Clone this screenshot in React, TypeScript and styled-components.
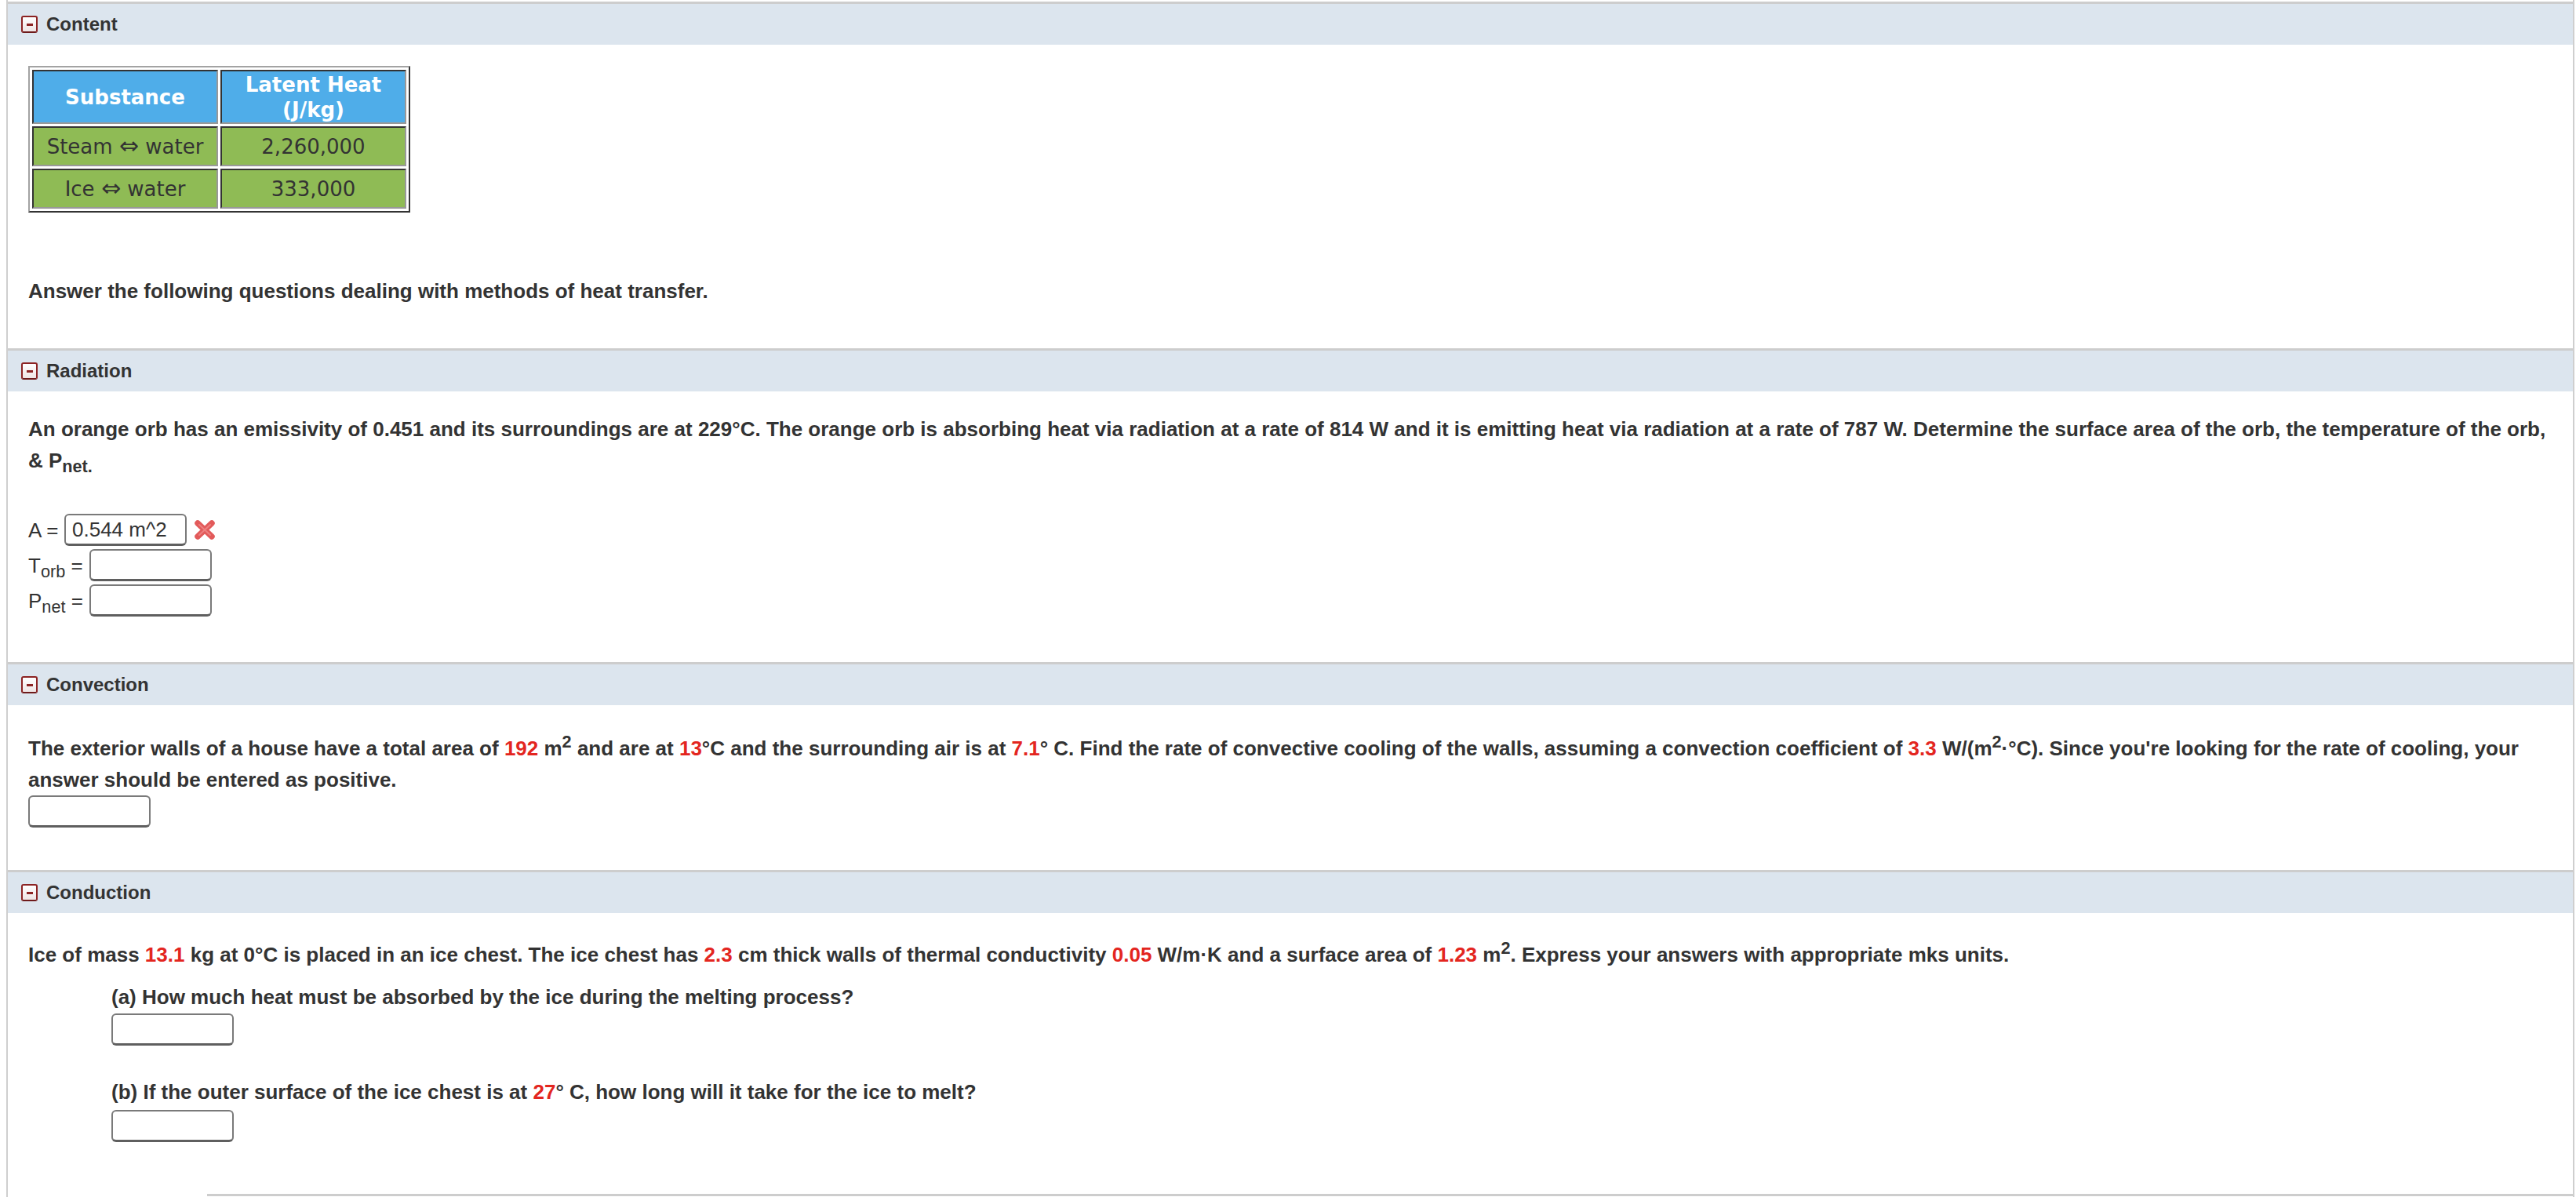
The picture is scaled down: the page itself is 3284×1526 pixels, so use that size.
import React from 'react';
import styled, { createGlobalStyle } from 'styled-components';

const GlobalStyle = createGlobalStyle`
  html, body {
    margin: 0;
    padding: 0;
    background: #fff;
  }
  body {
    font-family: "Liberation Sans", Arial, sans-serif;
    color: #333;
  }
  * {
    box-sizing: border-box;
  }
`;

const Page = styled.div`
  margin: 0 2px 0 8px;
  padding-top: 2px;
  min-height: 1526px;
  border-left: 2px solid #cfcfcf;
  border-right: 2px solid #cfcfcf;
`;

const SectionHeader = styled.div`
  display: flex;
  align-items: center;
  gap: 11px;
  height: 55px;
  padding-left: 17px;
  background: #dce5ee;
  border-top: 3px solid #cdcdcd;
  font-size: 24px;
  font-weight: bold;
  color: #333;
`;

const Toggle = styled.span`
  display: flex;
  align-items: center;
  justify-content: center;
  width: 21px;
  height: 22px;
  border: 2px solid #8c2323;
  border-bottom-color: #6e1a1a;
  border-radius: 3px;
  background: linear-gradient(#ffffff, #efe4e4);

  &::before {
    content: '';
    width: 8px;
    height: 3px;
    background: #8c2323;
  }
`;

const SectionBody = styled.div<{ $top: number; $bottom: number }>`
  padding: ${(p) => p.$top}px 26px ${(p) => p.$bottom}px 26px;
  font-size: 26px;
  line-height: 40px;
  font-weight: bold;
  color: #333;

  sup,
  sub {
    line-height: 0;
  }
`;

const Table = styled.table`
  border-collapse: separate;
  border-spacing: 3px;
  border: 2px solid;
  border-color: #a3a3a3 #333 #333 #a3a3a3;
  font-family: "DejaVu Sans", Verdana, sans-serif;
  font-size: 26px;
  font-weight: normal;
`;

const HeadCell = styled.th`
  width: 237px;
  height: 69px;
  padding: 0 8px;
  background: #4fade9;
  color: #fff;
  font-weight: bold;
  line-height: 32px;
  border: 2px solid;
  border-color: #333 #999 #999 #333;
`;

const Cell = styled.td`
  height: 51px;
  padding: 0 6px;
  background: #8fbb55;
  color: #333;
  text-align: center;
  white-space: nowrap;
  line-height: 32px;
  border: 2px solid;
  border-color: #333 #999 #999 #333;
`;

const Arrow = styled.span`
  font-size: 30px;
`;

const Paragraph = styled.p<{ $mt?: number }>`
  margin: ${(p) => p.$mt ?? 0}px 0 0;
`;

const Red = styled.span`
  color: #e3261f;
`;

const Answers = styled.div`
  display: flex;
  flex-direction: column;
  gap: 4px;
  margin-top: 48px;
`;

const AnswerRow = styled.div`
  display: flex;
  align-items: center;
  height: 41px;
  font-weight: normal;
  color: #333;
`;

const Label = styled.span<{ $w: number }>`
  width: ${(p) => p.$w}px;
  flex: none;
`;

const Field = styled.input<{ $mt?: number }>`
  display: block;
  width: 156px;
  height: 41px;
  margin-top: ${(p) => p.$mt ?? 0}px;
  padding: 0 8px;
  border: 2px solid #7a7a7a;
  border-bottom: 3px solid #5f5f5f;
  border-radius: 6px;
  background: #fff;
  font-family: "Liberation Sans", Arial, sans-serif;
  font-size: 26px;
  color: #333;
  outline: none;
`;

const WrongMark = styled.svg`
  flex: none;
  margin-left: 9px;
  width: 28px;
  height: 27px;
`;

const SubQuestion = styled.div<{ $mt: number }>`
  margin: ${(p) => p.$mt}px 0 0 106px;
`;

const Footer = styled.div`
  margin: 66px 0 0 254px;
  border-top: 3px solid #cdcdcd;
`;

function Cross() {
  return (
    <WrongMark viewBox="0 0 28 27">
      <path d="M5 5 L23 22 M23 5 L5 22" stroke="#e25a5a" strokeWidth="7.5" strokeLinecap="round" />
      <path d="M7 7 L21 20 M21 7 L7 20" stroke="#ee8080" strokeWidth="2" strokeLinecap="round" />
    </WrongMark>
  );
}

function Header({ title }: { title: string }) {
  return (
    <SectionHeader>
      <Toggle />
      {title}
    </SectionHeader>
  );
}

export default function App() {
  return (
    <>
      <GlobalStyle />
      <Page>
        <Header title="Content" />
        <SectionBody $top={27} $bottom={53}>
          <Table>
            <thead>
              <tr>
                <HeadCell>Substance</HeadCell>
                <HeadCell>Latent Heat (J/kg)</HeadCell>
              </tr>
            </thead>
            <tbody>
              <tr>
                <Cell>
                  Steam <Arrow>⇔</Arrow> water
                </Cell>
                <Cell>2,260,000</Cell>
              </tr>
              <tr>
                <Cell>
                  Ice <Arrow>⇔</Arrow> water
                </Cell>
                <Cell>333,000</Cell>
              </tr>
            </tbody>
          </Table>
          <Paragraph $mt={80}>Answer the following questions dealing with methods of heat transfer.</Paragraph>
        </SectionBody>

        <Header title="Radiation" />
        <SectionBody $top={28} $bottom={58}>
          <Paragraph>
            An orange orb has an emissivity of 0.451 and its surroundings are at 229°C. The orange orb is absorbing
            heat via radiation at a rate of 814 W and it is emitting heat via radiation at a rate of 787 W. Determine
            the surface area of the orb, the temperature of the orb, &amp; P<sub>net.</sub>
          </Paragraph>
          <Answers>
            <AnswerRow>
              <Label $w={46}>A =</Label>
              <Field defaultValue="0.544 m^2" />
              <Cross />
            </AnswerRow>
            <AnswerRow>
              <Label $w={78}>
                T<sub>orb</sub> =
              </Label>
              <Field />
            </AnswerRow>
            <AnswerRow>
              <Label $w={78}>
                P<sub>net</sub> =
              </Label>
              <Field />
            </AnswerRow>
          </Answers>
        </SectionBody>

        <Header title="Convection" />
        <SectionBody $top={35} $bottom={54}>
          <Paragraph>
            The exterior walls of a house have a total area of <Red>192</Red> m<sup>2</sup> and are at <Red>13</Red>°C
            and the surrounding air is at <Red>7.1</Red>° C. Find the rate of convective cooling of the walls, assuming
            a convection coefficient of <Red>3.3</Red> W/(m<sup>2</sup>·°C). Since you're looking for the rate of
            cooling, your answer should be entered as positive.
          </Paragraph>
          <Field />
        </SectionBody>

        <Header title="Conduction" />
        <SectionBody $top={33} $bottom={0}>
          <Paragraph>
            Ice of mass <Red>13.1</Red> kg at 0°C is placed in an ice chest. The ice chest has <Red>2.3</Red> cm thick
            walls of thermal conductivity <Red>0.05</Red> W/m·K and a surface area of <Red>1.23</Red> m<sup>2</sup>.
            Express your answers with appropriate mks units.
          </Paragraph>
          <SubQuestion $mt={14}>
            (a) How much heat must be absorbed by the ice during the melting process?
            <Field $mt={1} />
          </SubQuestion>
          <SubQuestion $mt={39}>
            (b) If the outer surface of the ice chest is at <Red>27</Red>° C, how long will it take for the ice to melt?
            <Field $mt={3} />
          </SubQuestion>
        </SectionBody>
        <Footer />
      </Page>
    </>
  );
}
